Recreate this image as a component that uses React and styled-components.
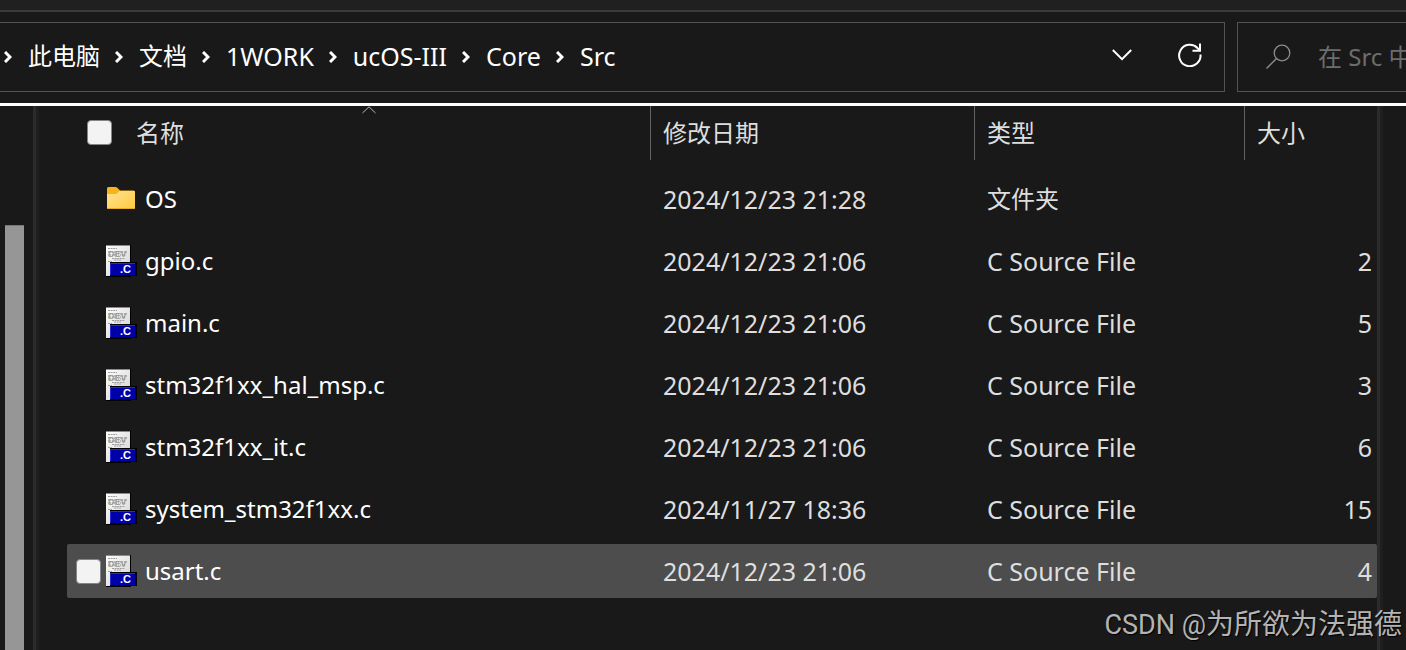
import React, { useState } from "react";
import styled, { createGlobalStyle } from "styled-components";

const crumbs = ["此电脑", "文档", "1WORK", "ucOS-III", "Core", "Src"];

const files = [
  { name: "OS", date: "2024/12/23 21:28", type: "文件夹", size: "", folder: true },
  { name: "gpio.c", date: "2024/12/23 21:06", type: "C Source File", size: "2" },
  { name: "main.c", date: "2024/12/23 21:06", type: "C Source File", size: "5" },
  { name: "stm32f1xx_hal_msp.c", date: "2024/12/23 21:06", type: "C Source File", size: "3" },
  { name: "stm32f1xx_it.c", date: "2024/12/23 21:06", type: "C Source File", size: "6" },
  { name: "system_stm32f1xx.c", date: "2024/11/27 18:36", type: "C Source File", size: "15" },
  { name: "usart.c", date: "2024/12/23 21:06", type: "C Source File", size: "4" },
];

const isChinese = (text) => /[\u4e00-\u9fff]/.test(text);

const FolderIcon = () => (
  <svg width="31" height="32" viewBox="0 0 31 32" aria-hidden="true">
    <defs>
      <linearGradient id="folder" x1="0" y1="0" x2="1" y2="1">
        <stop offset="0" stopColor="#ffe394" />
        <stop offset="1" stopColor="#ffca3e" />
      </linearGradient>
    </defs>
    <path d="M1 5.500Q1 4 2.500 4H9.500Q10.500 4 11.300 4.800L14 7.500H27.500Q29 7.500 29 9V13H1Z" fill="#f9b21c" />
    <path d="M1 11H9.500Q10.500 11 11.300 10.200L13.500 8H28Q29 8 29 9V25Q29 26 28 26H2Q1 26 1 25Z" fill="url(#folder)" />
    <path d="M1.500 25.500H28.500" stroke="#e8ac2c" />
  </svg>
);

const SourceIcon = () => (
  <svg width="31" height="32" viewBox="0 0 31 32" aria-hidden="true">
    <defs>
      <linearGradient id="page" x1="0" y1="0" x2="1" y2="1">
        <stop offset="0" stopColor="#ffffff" />
        <stop offset="1" stopColor="#d2d2d2" />
      </linearGradient>
    </defs>
    <path d="M1 0H25V32H0V1Z" fill="#000" />
    <path d="M0 0H24V31H0Z" fill="url(#page)" />
    <path d="M0 0.500H24" stroke="#8a8a8a" />
    <path d="M2 3.500H11M6 13.500H19M8 15H15M2 16.500H6" stroke="#a0a0a0" strokeDasharray="2 0.6" />
    <text x="2" y="12" fontSize="9" fontWeight="700" fontFamily="Liberation Sans" fill="#a4a4a4">DEV</text>
    <path d="M2 7H21M2 10H20" stroke="#777" strokeWidth="0.8" strokeDasharray="1.2 0.8" />
    <path d="M4 17H31V31H4Z" fill="#000" />
    <path d="M4 18H29V30H4Z" fill="#0000a8" />
    <path d="M4.500 30V18.500H29" stroke="#2b2bd0" fill="none" />
    <text x="14" y="28" fontSize="11" fontWeight="700" fontFamily="Liberation Sans" fill="#fff">.C</text>
  </svg>
);

const CrumbArrow = () => (
  <svg width="8" height="12" viewBox="0 0 8 12" aria-hidden="true">
    <path d="M1 1L6 6L1 11" stroke="#fff" strokeWidth="3" fill="none" />
  </svg>
);

export default function App() {
  const [selected, setSelected] = useState({});

  const toggle = (name) => {
    setSelected({ ...selected, [name]: !selected[name] });
  };

  return (
    <Window>
      <GlobalStyle />
      <TitleEdge />
      <Toolbar>
        <AddressBar>
          <Crumbs aria-label="路径">
            {crumbs.map((crumb) => (
              <Crumb key={crumb}>
                <CrumbArrow />
                <CrumbLink href="#" $cjk={isChinese(crumb)}>
                  {crumb}
                </CrumbLink>
              </Crumb>
            ))}
          </Crumbs>
          <IconButton aria-label="展开">
            <svg width="20" height="12" viewBox="0 0 20 12">
              <path d="M0.800 1L10 10.200L19.200 1" stroke="#fff" strokeWidth="2" fill="none" />
            </svg>
          </IconButton>
          <IconButton aria-label="刷新">
            <svg width="24" height="24" viewBox="0 0 24 24">
              <path d="M22.500 11.500A10.700 10.700 0 1 1 19.700 5.200L22 7.500" stroke="#fff" strokeWidth="2" fill="none" />
              <path d="M22 0.500V7.700H14.500" stroke="#fff" strokeWidth="2" fill="none" />
            </svg>
          </IconButton>
        </AddressBar>
        <SearchBox>
          <svg width="26" height="26" viewBox="0 0 26 26" aria-hidden="true">
            <circle cx="16" cy="9" r="7.800" stroke="#8c8c8c" strokeWidth="1.300" fill="none" />
            <path d="M10.500 14.500L0.500 24.500" stroke="#8c8c8c" strokeWidth="1.400" />
          </svg>
          <SearchInput aria-label="搜索" placeholder="在 Src 中搜索" />
        </SearchBox>
      </Toolbar>
      <Content>
        <Sidebar>
          <ScrollThumb />
        </Sidebar>
        <Splitter />
        <Listing>
          <Table>
            <thead>
              <HeadRow>
                <NameHead>
                  <HeadName>
                    <CheckBox type="checkbox" aria-label="全选" />
                    名称
                  </HeadName>
                  <SortMark width="14" height="8" viewBox="0 0 14 8" aria-hidden="true">
                    <path d="M0.500 7L7 0.800L13.500 7" stroke="#b8b8b8" fill="none" />
                  </SortMark>
                </NameHead>
                <Head>修改日期</Head>
                <Head>类型</Head>
                <Head>大小</Head>
              </HeadRow>
            </thead>
            <Body>
              {files.map((file) => {
                const active = file.name === "usart.c";
                return (
                  <Row key={file.name} $active={active}>
                    <NameCell>
                      <CheckSlot>
                        {active && (
                          <CheckBox
                            type="checkbox"
                            aria-label={file.name}
                            checked={!!selected[file.name]}
                            onChange={() => toggle(file.name)}
                          />
                        )}
                      </CheckSlot>
                      {file.folder ? <FolderIcon /> : <SourceIcon />}
                      <FileName>{file.name}</FileName>
                    </NameCell>
                    <Cell>{file.date}</Cell>
                    <Cell $cjk={isChinese(file.type)}>{file.type}</Cell>
                    <SizeCell>{file.size}</SizeCell>
                  </Row>
                );
              })}
            </Body>
          </Table>
        </Listing>
        <Splitter />
        <Gutter />
      </Content>
      <Watermark>
        <WatermarkLatin>CSDN @</WatermarkLatin>为所欲为法强德
      </Watermark>
    </Window>
  );
}

const GlobalStyle = createGlobalStyle`
  * {
    box-sizing: border-box;
  }
  body {
    margin: 0;
    background: #191919;
    font-family: "Noto Sans", "Noto Sans CJK SC", sans-serif;
    font-size: 25px;
    color: #dedede;
  }
`;
const Window = styled.div`
  position: relative;
  display: flex;
  flex-direction: column;
  min-height: 100vh;
  overflow: hidden;
`;
const TitleEdge = styled.div`
  height: 12px;
  background: #202020;
  border-bottom: 2px solid #3b3b3b;
`;
const Toolbar = styled.header`
  display: flex;
  gap: 12px;
  padding: 10px 0 11px;
  border-bottom: 3px solid #fff;
`;
const AddressBar = styled.div`
  display: flex;
  align-items: center;
  flex: 1;
  height: 70px;
  padding-right: 10px;
  border: 1px solid #535353;
  border-left: none;
`;
const Crumbs = styled.nav`
  display: flex;
  align-items: center;
  flex: 1;
  gap: 15px;
  padding-left: 4px;
`;
const Crumb = styled.span`
  display: flex;
  align-items: center;
  gap: 16px;
`;
const CrumbLink = styled.a`
  padding-bottom: 2px;
  font-size: ${(props) => (props.$cjk ? "24px" : "25px")};
  line-height: 36px;
  color: #fff;
  text-decoration: none;
`;
const IconButton = styled.button`
  display: flex;
  align-items: center;
  justify-content: center;
  width: 48px;
  height: 48px;
  margin-left: 20px;
  padding: 0 0 4px;
  border: none;
  background: none;
`;
const SearchBox = styled.label`
  display: flex;
  align-items: center;
  gap: 26px;
  width: 169px;
  padding-left: 28px;
  border: 1px solid #535353;
  border-right: none;

  svg {
    flex: none;
  }
`;
const SearchInput = styled.input`
  flex: 1;
  min-width: 0;
  padding: 0 0 2px;
  border: none;
  outline: none;
  background: none;
  font-family: inherit;
  font-size: 24px;
  color: #fff;

  &::placeholder {
    color: #6d6d6d;
  }
`;
const Content = styled.main`
  display: flex;
  flex: 1;
`;
const Sidebar = styled.aside`
  display: flex;
  width: 33px;
  padding: 119px 9px 0 5px;
`;
const ScrollThumb = styled.div`
  flex: 1;
  background: #969696;
  border-top: 1px solid #777;
`;
const Splitter = styled.div`
  width: 6px;
  background: #1f1f1f;
  border-left: 3px solid #2b2b2b;
`;
const Listing = styled.section`
  flex: 1;
  padding-left: 28px;
`;
const Table = styled.table`
  display: block;

  thead {
    display: block;
  }
`;
const HeadRow = styled.tr`
  display: grid;
  grid-template-columns: minmax(0, 1fr) 324px 270px 133px;
  height: 54px;
  margin-bottom: 12px;
`;
const Head = styled.th`
  padding: 0 0 0 12px;
  border-left: 1px solid #636363;
  font-size: 24px;
  font-weight: 400;
  line-height: 53px;
  text-align: left;
`;
const NameHead = styled(Head)`
  position: relative;
  margin-left: 20px;
  padding: 0;
  border: none;
`;
const HeadName = styled.label`
  display: flex;
  align-items: center;
  gap: 24px;
`;
const SortMark = styled.svg`
  position: absolute;
  top: 0;
  left: calc(50% - 7px);
`;
const Body = styled.tbody`
  display: grid;
  gap: 8px;
`;
const Row = styled.tr`
  display: grid;
  grid-template-columns: minmax(0, 1fr) 324px 270px 133px;
  height: 54px;
  border-radius: 2px;
  background: ${(props) => (props.$active ? "#4d4d4d" : "none")};
`;
const Cell = styled.td`
  padding: 0 0 0 13px;
  font-size: ${(props) => (props.$cjk ? "24px" : "25px")};
  line-height: 54px;
  white-space: nowrap;
`;
const NameCell = styled(Cell)`
  display: flex;
  align-items: center;
  padding-left: 9px;
`;
const SizeCell = styled(Cell)`
  padding-right: 5px;
  text-align: right;
`;
const CheckSlot = styled.span`
  display: flex;
  width: 30px;
`;
const CheckBox = styled.input`
  appearance: none;
  width: 25px;
  height: 25px;
  margin: 0;
  border: 1px solid #858585;
  border-radius: 4px;
  background: #f3f3f3;
`;
const FileName = styled.span`
  padding-left: 8px;
  font-size: 24px;
  color: #fff;
`;
const Gutter = styled.div`
  width: 23px;
`;
const Watermark = styled.div`
  position: absolute;
  right: 4px;
  bottom: 5px;
  font-size: 28px;
  line-height: 40px;
  color: #b4b4b4;
  text-shadow: 1px 1px 1px #000;
`;
const WatermarkLatin = styled.span`
  font-family: Roboto, sans-serif;
  font-size: 27px;
`;
